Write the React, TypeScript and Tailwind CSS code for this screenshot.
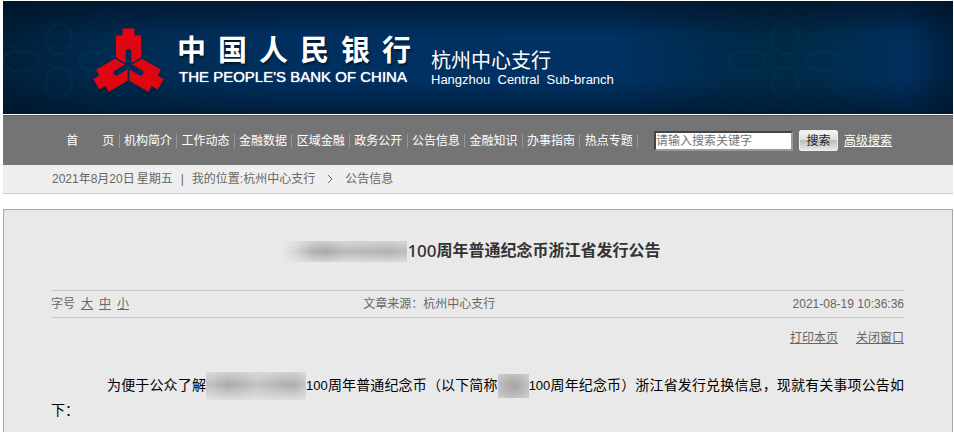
const navItems = [
  "首\u3000\u3000页",
  "机构简介",
  "工作动态",
  "金融数据",
  "区域金融",
  "政务公开",
  "公告信息",
  "金融知识",
  "办事指南",
  "热点专题",
];

const bankName = ["中", "国", "人", "民", "银", "行"];

function Emblem() {
  const arm = "M-18 -112H18V-91H38V-22L0 0L-38 -22V-91H-18Z";
  return (
    <svg viewBox="-110 -116 220 198" className="mt-1 h-[66px] w-[73px] shrink-0 drop-shadow-md" aria-hidden="true">
      <g fill="#df0611">
        <path d={arm} />
        <path d={arm} transform="rotate(120)" />
        <path d={arm} transform="rotate(240)" />
      </g>
      <g stroke="#012a55" fill="none">
        <path d="M0 0V50M0 0L-43 -25M0 0L43 -25" strokeWidth="5" />
        <path d="M0 0V-42M0 0L-36 21M0 0L36 21" strokeWidth="17" strokeLinecap="round" />
      </g>
    </svg>
  );
}

// faint coin-like rosette woven into the banner
function Rosette({ className }: { className: string }) {
  return (
    <svg viewBox="0 0 240 112" className={className} fill="none" stroke="#0a4474" aria-hidden="true">
      <g strokeWidth="3" opacity="0.16">
        <ellipse cx="120" cy="38" rx="13" ry="15" />
        <ellipse cx="120" cy="81" rx="13" ry="15" />
        <ellipse cx="82" cy="60" rx="18" ry="10" />
        <ellipse cx="158" cy="60" rx="18" ry="10" />
      </g>
      <g strokeWidth="1" opacity="0.2">
        <path d="M30 46H210M40 53H200M26 60H214M40 67H200M30 74H210" strokeDasharray="14 5" />
        <ellipse cx="120" cy="60" rx="60" ry="46" strokeDasharray="2 3" />
        <ellipse cx="120" cy="60" rx="82" ry="52" strokeDasharray="2 4" />
      </g>
    </svg>
  );
}

function Banner() {
  return (
    <header className="relative flex h-[113px] items-center overflow-hidden bg-[linear-gradient(180deg,rgba(0,18,38,0.75)_0%,rgba(0,25,50,0)_32%,rgba(0,25,50,0)_70%,rgba(0,18,38,0.6)_100%),linear-gradient(90deg,#001f38_0%,#002b50_12%,#003060_30%,#003263_64%,#002b4f_74%,#002944_82%,#002f5c_95%,#001e3c_100%)] pl-[89px] text-white">
      <Rosette className="absolute -left-16 top-0 h-28 w-60" />
      <Rosette className="absolute right-12 top-0 h-28 w-60" />
      <Emblem />
      <div className="ml-3 w-[234px] pt-1.5">
        <div className="flex justify-between text-[29px] leading-8 font-bold [text-shadow:1px_2px_2px_rgba(0,0,0,0.5)]">
          {bankName.map((c) => (
            <span key={c}>{c}</span>
          ))}
        </div>
        <div className="pl-0.5 text-[15px] leading-5 whitespace-nowrap [text-shadow:0_0_1px_#fff]">
          THE PEOPLE'S BANK OF CHINA
        </div>
      </div>
      <div className="ml-5 pt-6">
        <div className="text-xl leading-5">杭州中心支行</div>
        <div className="text-[13px] leading-[18px] whitespace-pre">Hangzhou  Central  Sub-branch</div>
      </div>
    </header>
  );
}

function NavBar() {
  return (
    <div className="mt-px flex h-[50px] items-center border-t border-[#555a60] bg-[#747474] pl-[59px] text-white">
      <nav className="grid w-[576px] grid-cols-10">
        {navItems.map((item) => (
          <a key={item} href="#" className="border-r border-[#9297a3] text-center leading-[14px] whitespace-nowrap">
            {item}
          </a>
        ))}
      </nav>
      <form className="ml-4 flex items-center" onSubmit={(e) => e.preventDefault()}>
        <input
          type="text"
          aria-label="搜索关键字"
          placeholder="请输入搜索关键字"
          className="h-5 w-[139px] border-2 border-t-[#444] border-r-[#999] border-b-[#999] border-l-[#444] bg-white text-[#333] placeholder:text-[#757575]"
        />
        <button
          type="submit"
          className="ml-1.5 h-[21px] w-[39px] rounded-xs border border-[#eee] bg-[linear-gradient(#f4f4f4_0%,#dedede_45%,#bcbcbc_50%,#e8e8e8_100%)] leading-4 text-[#222]"
        >
          搜索
        </button>
        <a href="#" className="ml-1.5 underline">
          高级搜索
        </a>
      </form>
    </div>
  );
}

function Article() {
  return (
    <article className="mt-[15px] min-h-[240px] border border-[#a2a8b0] bg-[#e9e9e9] pr-12 pl-[47px] text-[#666]">
      <h1 className="flex h-20 items-center justify-center pt-0.5 pr-3 text-base font-bold text-[#333]">
        <span className="h-[21px] w-[125px] bg-[linear-gradient(90deg,#e9e9e9_0%,#d6d6d6_10%,#b0b0b0_25%,#a8a8a8_35%,#bababa_50%,#b6b6b6_70%,#b0b0b0_85%,#bdbdbd_100%)] [mask-image:linear-gradient(rgba(0,0,0,0.4),#000_50%,rgba(0,0,0,0.3))]" />
        <span className="font-['Noto_Sans'] text-[17px] font-medium">100</span>
        周年普通纪念币浙江省发行公告
      </h1>
      <div className="grid h-7 grid-cols-3 items-center border-y border-[#c8c8c8]">
        <div className="flex gap-1.5">
          <span>字号</span>
          <a href="#" className="underline">大</a>
          <a href="#" className="underline">中</a>
          <a href="#" className="underline">小</a>
        </div>
        <div className="pl-7">文章来源：杭州中心支行</div>
        <time className="text-right">2021-08-19 10:36:36</time>
      </div>
      <div className="mt-[11px] flex justify-end gap-[18px] leading-[18px]">
        <a href="#" className="underline">打印本页</a>
        <a href="#" className="underline">关闭窗口</a>
      </div>
      <p className="mt-[26px] text-justify indent-14 text-sm leading-[25px] text-black">
        为便于公众了解
        <span className="-my-2 inline-block h-7 w-[100px] bg-[linear-gradient(90deg,#c4c4c4_0%,#aaa_22%,#b8b8b8_40%,#c2c2c2_52%,#b2b2b2_75%,#adadad_88%,#c6c6c6_100%)] mask-[linear-gradient(rgba(0,0,0,0.4),#000_45%,rgba(0,0,0,0.2))] align-middle" />
        <span className="text-[13px]">100</span>周年普通纪念币（以下简称
        <span className="-my-2 inline-block h-6 w-[31px] bg-[radial-gradient(#a8a8a8_10%,#b9b9b9_50%,#d0d0d0_100%)] align-middle" />
        <span className="text-[13px]">100</span>周年纪念币）浙江省发行兑换信息，现就有关事项公告如下：
      </p>
    </article>
  );
}

export default function App() {
  return (
    <div className="min-h-screen bg-white pt-px pr-px pl-[3px] font-['Liberation_Sans','Noto_Sans_CJK_SC',sans-serif] text-xs">
      <Banner />
      <NavBar />
      <div className="flex h-[29px] items-center border-b border-[#ccc] bg-[#efefef] pl-[49px] text-[#666]">
        <span>2021年8月20日</span>
        <span className="ml-0.5">星期五</span>
        <span className="mx-2">|</span>
        <span>我的位置:杭州中心支行</span>
        <svg viewBox="0 0 6 10" className="mx-3 h-2.5 w-1.5" fill="none" stroke="#666" aria-hidden="true">
          <path d="M1 1L5 5L1 9" />
        </svg>
        <span>公告信息</span>
      </div>
      <Article />
    </div>
  );
}
